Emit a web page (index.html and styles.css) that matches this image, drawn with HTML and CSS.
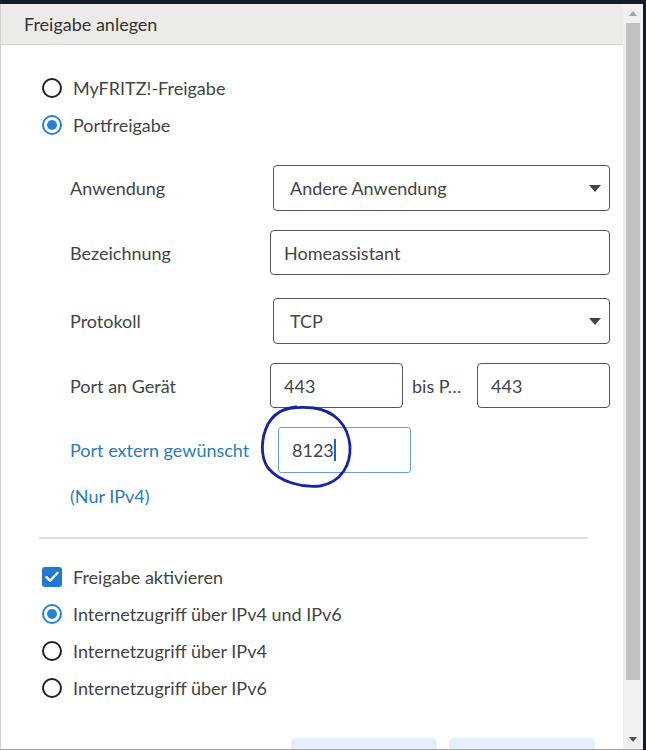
FILE: index.html
```html
<!DOCTYPE html>
<html lang="de">
<head>
<meta charset="utf-8">
<title>Freigabe anlegen</title>
<link rel="stylesheet" href="styles.css">
</head>
<body>
<div class="window">
  <div class="dialog">
    <div class="dlg-head">Freigabe anlegen</div>
    <div class="dlg-body">
      <div class="choices">
        <div class="choice"><span class="rb"></span>MyFRITZ!-Freigabe</div>
        <div class="choice"><span class="rb on"></span>Portfreigabe</div>
      </div>

      <div class="form">
        <div class="row r-app">
          <span class="lbl">Anwendung</span>
          <div class="select">Andere Anwendung<span class="caret"></span></div>
        </div>
        <div class="row r-name">
          <span class="lbl">Bezeichnung</span>
          <div class="input wide">Homeassistant</div>
        </div>
        <div class="row r-proto">
          <span class="lbl">Protokoll</span>
          <div class="select">TCP<span class="caret"></span></div>
        </div>
        <div class="row r-port">
          <span class="lbl">Port an Gerät</span>
          <div class="input port">443</div>
          <span class="bis">bis P…</span>
          <div class="input port">443</div>
        </div>
        <div class="row r-ext">
          <span class="lbl blue">Port extern gewünscht</span>
          <div class="input port ext">8123<span class="cursor"></span></div>
        </div>
        <div class="row r-note">
          <span class="blue">(Nur IPv4)</span>
        </div>
      </div>

      <div class="divider"></div>

      <div class="choices lower">
        <div class="choice"><span class="cb"><svg width="14" height="12" viewBox="0 0 14 12"><path d="M1.5 6.2 L5.2 9.8 L12.5 1.8" fill="none" stroke="#fff" stroke-width="2.4" stroke-linecap="round" stroke-linejoin="round"/></svg></span>Freigabe aktivieren</div>
        <div class="choice"><span class="rb on"></span>Internetzugriff über IPv4 und IPv6</div>
        <div class="choice"><span class="rb"></span>Internetzugriff über IPv4</div>
        <div class="choice"><span class="rb"></span>Internetzugriff über IPv6</div>
      </div>

      <div class="buttons">
        <span class="btn"></span>
        <span class="btn"></span>
      </div>

      <svg class="scribble" width="100" height="92" viewBox="0 0 100 92">
        <path d="M14 16 C22 6, 40 4, 56 6 C76 9, 90 22, 92 44 C93 62, 84 80, 62 84 C44 86, 22 80, 10 66 C2 54, 3 36, 10 22 C16 12, 26 6, 38 5" fill="none" stroke="#1424a3" stroke-width="2.8" stroke-linecap="round" stroke-linejoin="round"/>
      </svg>
    </div>
  </div>
  <div class="scrollbar">
    <span class="sb-arrow sb-up"></span>
    <span class="sb-thumb"></span>
    <span class="sb-arrow sb-down"></span>
  </div>
</div>
</body>
</html>
```

FILE: styles.css
```css
* { box-sizing: border-box; }
html, body { margin: 0; padding: 0; }
body {
  background: #131c28;
  height: 750px;
  overflow: hidden;
  font-family: Lato, "Liberation Sans", sans-serif;
  font-size: 18px;
  color: #444;
}
.window {
  margin-top: 4px;
  width: 643px;
  height: 746px;
  display: flex;
  background: #fff;
  border-left: 1px solid #d2d2d2;
  border-bottom: 1px solid #a8a8a8;
}
.dialog {
  width: 622px;
  flex: none;
  overflow: hidden;
  display: flex;
  flex-direction: column;
}
.dlg-head {
  height: 41px;
  flex: none;
  background: #edebe7;
  border-bottom: 1px solid #d8d6d1;
  padding-left: 23px;
  display: flex;
  align-items: center;
  color: #333;
}
.dlg-body {
  position: relative;
  flex: 1;
  padding: 24px 0 0 41px;
}
.choice {
  display: flex;
  align-items: center;
  height: 37px;
  white-space: nowrap;
}
.rb {
  width: 20px;
  height: 20px;
  flex: none;
  margin-right: 11px;
  border: 2px solid #222;
  border-radius: 50%;
  display: flex;
  align-items: center;
  justify-content: center;
}
.rb.on { border-color: #2a80d5; }
.rb.on::after {
  content: "";
  width: 10px;
  height: 10px;
  border-radius: 50%;
  background: #2a80d5;
}
.cb {
  width: 20px;
  height: 20px;
  flex: none;
  margin-right: 11px;
  border-radius: 3px;
  background: #1f78d3;
  display: flex;
  align-items: center;
  justify-content: center;
}
.form {
  padding-left: 28px;
  margin-top: 22px;
}
.row {
  display: flex;
  align-items: center;
  white-space: nowrap;
}
.lbl { width: 200px; flex: none; }
.blue { color: #2c7cb6; }
.r-name, .r-port, .r-ext { margin-top: 19px; }
.r-proto { margin-top: 23px; }
.r-note { margin-top: 11px; height: 24px; }
.select {
  width: 337px;
  height: 46px;
  margin-left: 3px;
  border: 1px solid #555;
  border-radius: 4px;
  padding-left: 16px;
  display: flex;
  align-items: center;
}
.caret {
  margin-left: auto;
  margin-right: 8px;
  width: 0;
  height: 0;
  border-left: 6px solid transparent;
  border-right: 6px solid transparent;
  border-top: 7px solid #444;
}
.input {
  height: 45px;
  border: 1px solid #555;
  border-radius: 4px;
  padding-left: 13px;
  display: flex;
  align-items: center;
}
.input.wide { width: 340px; }
.input.port { width: 133px; }
.input.ext {
  margin-left: 8px;
  border-color: #6f9fc6;
  border-radius: 3px;
  height: 46px;
}
.bis {
  width: 74px;
  padding-left: 9px;
  flex: none;
}
.cursor {
  display: inline-block;
  width: 2px;
  height: 22px;
  background: #1c63b8;
}
.divider {
  margin: 29px 0 0 -3px;
  width: 549px;
  height: 2px;
  background: #e0e0e0;
}
.lower { margin-top: 19px; }
.buttons {
  margin-top: 32px;
  display: flex;
  justify-content: flex-end;
  gap: 12px;
  padding-right: 28px;
}
.btn {
  width: 146px;
  height: 40px;
  border-radius: 5px;
  background: #e4effa;
}
.scribble {
  position: absolute;
  left: 257px;
  top: 357px;
}
.scrollbar {
  width: 20px;
  flex: none;
  background: #f0f0f0;
  display: flex;
  flex-direction: column;
  align-items: center;
}
.sb-arrow {
  height: 19px;
  flex: none;
  display: flex;
  align-items: center;
  justify-content: center;
}
.sb-up::before {
  content: "";
  border-left: 4px solid transparent;
  border-right: 4px solid transparent;
  border-bottom: 5px solid #a3a3a3;
}
.sb-down { margin-top: auto; height: 20px; }
.sb-down::before {
  content: "";
  border-left: 4px solid transparent;
  border-right: 4px solid transparent;
  border-top: 5px solid #505050;
}
.sb-thumb {
  width: 14px;
  height: 657px;
  background: #c1c1c1;
  flex: none;
}
```
